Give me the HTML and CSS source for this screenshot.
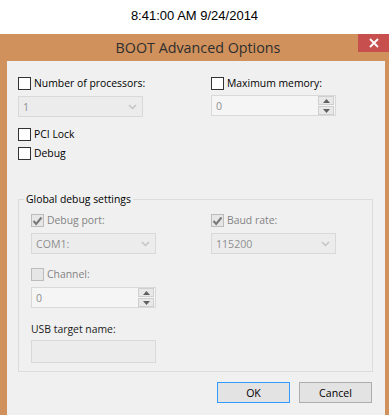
FILE: index.html
```html
<!DOCTYPE html>
<html>
<head>
<meta charset="utf-8">
<link rel="stylesheet" href="styles.css">
</head>
<body>
<div class="stamp">8:41:00 AM 9/24/2014</div>
<div class="window">
  <div class="titlebar">
    <span class="title">BOOT Advanced Options</span>
    <span class="close"><svg width="10" height="10" viewBox="0 0 10 10"><path d="M1 1L9 9M9 1L1 9" stroke="#fff" stroke-width="1.8"/></svg></span>
  </div>
  <div class="client">
    <div class="grid top">
      <div class="cell">
        <label class="chk"><span class="box"></span><span>Number of processors:</span></label>
        <div class="combo c1"><span>1</span><svg class="chev" width="9" height="6" viewBox="0 0 9 6"><path d="M1 1L4.5 4.5L8 1" fill="none" stroke="#c4c4c4" stroke-width="1.5"/></svg></div>
      </div>
      <div class="cell">
        <label class="chk"><span class="box"></span><span>Maximum memory:</span></label>
        <div class="spin c2"><span class="val">0</span><span class="btns"><span class="sb"><svg width="7" height="4" viewBox="0 0 7 4"><path d="M0 4L3.5 0L7 4Z" fill="#606060"/></svg></span><span class="sb"><svg width="7" height="4" viewBox="0 0 7 4"><path d="M0 0L3.5 4L7 0Z" fill="#606060"/></svg></span></span></div>
      </div>
    </div>
    <label class="chk pci"><span class="box"></span><span>PCI Lock</span></label>
    <label class="chk dbg"><span class="box"></span><span>Debug</span></label>
    <fieldset class="group">
      <legend>Global debug settings</legend>
      <div class="grid ginner">
        <div class="cell">
          <label class="chk dis"><span class="box checked"><svg width="11" height="10" viewBox="0 0 11 10"><path d="M1.5 5L4.2 8L9.5 1.5" fill="none" stroke="#787878" stroke-width="2"/></svg></span><span>Debug port:</span></label>
          <div class="combo c1"><span>COM1:</span><svg class="chev" width="9" height="6" viewBox="0 0 9 6"><path d="M1 1L4.5 4.5L8 1" fill="none" stroke="#c4c4c4" stroke-width="1.5"/></svg></div>
        </div>
        <div class="cell">
          <label class="chk dis"><span class="box checked"><svg width="11" height="10" viewBox="0 0 11 10"><path d="M1.5 5L4.2 8L9.5 1.5" fill="none" stroke="#787878" stroke-width="2"/></svg></span><span>Baud rate:</span></label>
          <div class="combo c1"><span>115200</span><svg class="chev" width="9" height="6" viewBox="0 0 9 6"><path d="M1 1L4.5 4.5L8 1" fill="none" stroke="#c4c4c4" stroke-width="1.5"/></svg></div>
        </div>
      </div>
      <label class="chk dis chan"><span class="box grey"></span><span>Channel:</span></label>
      <div class="spin c1"><span class="val">0</span><span class="btns"><span class="sb"><svg width="7" height="4" viewBox="0 0 7 4"><path d="M0 4L3.5 0L7 4Z" fill="#606060"/></svg></span><span class="sb"><svg width="7" height="4" viewBox="0 0 7 4"><path d="M0 0L3.5 4L7 0Z" fill="#606060"/></svg></span></span></div>
      <div class="usblabel">USB target name:</div>
      <div class="textbox"></div>
    </fieldset>
    <div class="buttons">
      <span class="btn default">OK</span>
      <span class="btn">Cancel</span>
    </div>
  </div>
</div>
</body>
</html>
```
FILE: styles.css
```css
html, body {
  margin: 0;
  padding: 0;
  background: #fff;
  overflow: hidden;
}
body {
  width: 389px;
  height: 415px;
  font-family: "Open Sans", "Noto Sans", sans-serif;
}
.stamp {
  height: 34px;
  box-sizing: border-box;
  padding-top: 8px;
  text-align: center;
  font-family: "Liberation Sans", Arial, sans-serif;
  font-size: 13px;
  line-height: 16px;
  color: #000;
}
.window {
  background: #d0915c;
  padding: 0 4px 0 7px;
  height: 381px;
}
.titlebar {
  height: 27px;
  display: flex;
  align-items: flex-start;
  justify-content: center;
  position: relative;
}
.title {
  font-size: 14.3px;
  line-height: 20px;
  color: #2e2e2e;
  margin-top: 4px;
  margin-left: 4px;
}
.close {
  position: absolute;
  right: -4px;
  top: 0;
  width: 31px;
  height: 18px;
  background: #c7504f;
  display: flex;
  align-items: center;
  justify-content: center;
}
.client {
  background: #f0f0f0;
  height: 354px;
  box-sizing: border-box;
  padding: 16px 0 0 11px;
  font-size: 10.4px;
  color: #000;
}
.grid {
  display: grid;
  grid-template-columns: 193px 125px;
}
.cell {
  display: flex;
  flex-direction: column;
}
.chk {
  display: flex;
  align-items: center;
  height: 13px;
  line-height: 13px;
  white-space: nowrap;
}
.box {
  width: 13px;
  height: 13px;
  box-sizing: border-box;
  border: 1px solid #333;
  background: #fff;
  margin-right: 3px;
  flex: none;
  display: flex;
  align-items: center;
  justify-content: center;
}
.dis {
  color: #838383;
}
.box.checked, .box.grey {
  border-color: #bcbcbc;
  background: #e6e6e6;
}
.combo, .spin {
  width: 125px;
  height: 21px;
  box-sizing: border-box;
  border: 1px solid #d9d9d9;
  background: #ececec;
  color: #8f8f8f;
  display: flex;
  align-items: center;
  padding-left: 4px;
  font-size: 10.6px;
}
.combo .chev {
  margin-left: auto;
  margin-right: 5px;
}
.c1 { margin-top: 6px; }
.c2 { margin-top: 5px; }
.spin {
  background: #f5f5f5;
  padding-right: 1px;
}
.spin .val { flex: 1; }
.btns {
  display: flex;
  flex-direction: column;
  width: 16px;
  height: 19px;
  gap: 1px;
}
.sb {
  flex: 1;
  background: #e8e8e8;
  border: 1px solid #cfcfcf;
  display: flex;
  align-items: center;
  justify-content: center;
}
.pci { margin-top: 11px; }
.dbg { margin-top: 6px; }
.group {
  margin: 32px 0 0 0;
  padding: 0 0 10px 12px;
  width: 355px;
  height: 180px;
  box-sizing: border-box;
  border: 1px solid #dcdcdc;
}
.group legend {
  margin-left: -7px;
  padding: 0 2px;
  font-size: 10.4px;
  line-height: 15px;
  color: #000;
}
.ginner {
  margin-top: 7px;
  grid-template-columns: 180px 125px;
}
.chan { margin-top: 14px; }
.usblabel {
  margin-top: 15px;
  line-height: 13px;
  color: #1a1a1a;
}
.textbox {
  margin-top: 4px;
  width: 125px;
  height: 23px;
  box-sizing: border-box;
  border: 1px solid #d9d9d9;
  background: #ececec;
}
.buttons {
  display: flex;
  gap: 9px;
  margin: 10px 0 0 199px;
}
.btn {
  width: 73px;
  height: 21px;
  box-sizing: border-box;
  border: 1px solid #adadad;
  background: #e3e3e3;
  display: flex;
  align-items: center;
  justify-content: center;
  font-size: 10.6px;
  color: #000;
}
.btn.default {
  border-color: #3399ff;
  background: #e3e3e3;
}
```
